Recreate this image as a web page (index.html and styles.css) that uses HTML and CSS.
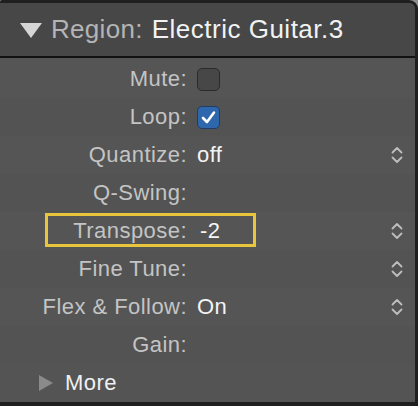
FILE: index.html
```html
<!DOCTYPE html>
<html>
<head>
<meta charset="utf-8">
<link rel="stylesheet" href="styles.css">
</head>
<body>
<div class="panel">
  <div class="header">
    <span class="disclosure-down"></span>
    <span class="h-label">Region:</span>
    <span class="h-value">Electric Guitar.3</span>
  </div>
  <div class="rows">
    <div class="row">
      <span class="label">Mute:</span>
      <span class="value"><span class="check"></span></span>
    </div>
    <div class="row alt">
      <span class="label">Loop:</span>
      <span class="value"><span class="check on"><svg width="23" height="23" viewBox="0 0 23 23"><polyline points="6,12 10,16 17,6.5" fill="none" stroke="#fff" stroke-width="2.6" stroke-linecap="round" stroke-linejoin="round"/></svg></span></span>
    </div>
    <div class="row">
      <span class="label">Quantize:</span>
      <span class="value">off</span>
      <span class="stepper"><svg width="12" height="20" viewBox="0 0 12 20"><polyline points="1.5,7.5 6,3 10.5,7.5" /><polyline points="1.5,12.5 6,17 10.5,12.5" /></svg></span>
    </div>
    <div class="row alt">
      <span class="label">Q-Swing:</span>
      <span class="value"></span>
    </div>
    <div class="row">
      <span class="highlight"></span>
      <span class="label">Transpose:</span>
      <span class="value pad">-2</span>
      <span class="stepper"><svg width="12" height="20" viewBox="0 0 12 20"><polyline points="1.5,7.5 6,3 10.5,7.5" /><polyline points="1.5,12.5 6,17 10.5,12.5" /></svg></span>
    </div>
    <div class="row alt">
      <span class="label">Fine Tune:</span>
      <span class="value"></span>
      <span class="stepper"><svg width="12" height="20" viewBox="0 0 12 20"><polyline points="1.5,7.5 6,3 10.5,7.5" /><polyline points="1.5,12.5 6,17 10.5,12.5" /></svg></span>
    </div>
    <div class="row">
      <span class="label">Flex &amp; Follow:</span>
      <span class="value">On</span>
      <span class="stepper"><svg width="12" height="20" viewBox="0 0 12 20"><polyline points="1.5,7.5 6,3 10.5,7.5" /><polyline points="1.5,12.5 6,17 10.5,12.5" /></svg></span>
    </div>
    <div class="row alt">
      <span class="label">Gain:</span>
      <span class="value"></span>
    </div>
    <div class="more">
      <span class="disclosure-right"></span>
      <span class="more-text">More</span>
    </div>
  </div>
</div>
</body>
</html>
```

FILE: styles.css
```css
html, body {
  margin: 0;
  padding: 0;
}
body {
  background: #8e8e8e;
  width: 418px;
  height: 406px;
  overflow: hidden;
  font-family: "Liberation Sans", Arial, sans-serif;
}
.panel {
  box-sizing: border-box;
  width: 418px;
  height: 406px;
  background: #545454;
  border-top: 3px solid #1f1f1f;
  border-right: 3px solid #1f1f1f;
  border-bottom: 4px solid #1f1f1f;
  border-top-right-radius: 9px;
  border-top-left-radius: 2px;
  overflow: hidden;
  display: flex;
  flex-direction: column;
}
.header {
  height: 56px;
  background: #474747;
  border-bottom: 2px solid #111;
  display: flex;
  align-items: center;
  padding-left: 20px;
  font-size: 26px;
  letter-spacing: 0.3px;
  box-sizing: content-box;
}
.disclosure-down {
  width: 0;
  height: 0;
  border-left: 11px solid transparent;
  border-right: 11px solid transparent;
  border-top: 15px solid #d6d6d6;
  margin-right: 9px;
  margin-top: 2px;
}
.h-label {
  color: #b4b4b4;
  margin-right: 9px;
}
.h-value {
  color: #f2f2f2;
  letter-spacing: 0.5px;
}
.rows {
  display: flex;
  flex-direction: column;
  padding-top: 2px;
}
.row {
  position: relative;
  height: 38px;
  display: grid;
  grid-template-columns: 187px 1fr 24px;
  align-items: center;
  font-size: 22px;
  letter-spacing: 0.45px;
  background: #555555;
}
.row.alt {
  background: #535353;
}
.label {
  color: #c4c4c4;
  text-align: right;
  white-space: nowrap;
}
.value {
  color: #f4f4f4;
  padding-left: 10px;
  display: flex;
  align-items: center;
}
.value.pad {
  padding-left: 13px;
}
.check {
  box-sizing: border-box;
  width: 23px;
  height: 23px;
  border-radius: 5px;
  background: #474747;
  border: 1px solid #2a2a2a;
  display: inline-block;
  margin-top: 1px;
}
.check.on {
  background: #2f67ad;
  border-color: #1f3d66;
}
.check svg {
  display: block;
  margin: -1px;
}
.stepper {
  display: flex;
  align-items: center;
}
.stepper svg polyline {
  fill: none;
  stroke: #bdbdbd;
  stroke-width: 1.8;
  stroke-linecap: round;
  stroke-linejoin: round;
}
.highlight {
  position: absolute;
  left: 45px;
  top: 1px;
  width: 211px;
  height: 34px;
  box-sizing: border-box;
  border: 3px solid #e8c63c;
}
.more {
  height: 38px;
  display: flex;
  align-items: center;
  padding-left: 39px;
  font-size: 22px;
  letter-spacing: 0.45px;
}
.disclosure-right {
  width: 0;
  height: 0;
  border-top: 8px solid transparent;
  border-bottom: 8px solid transparent;
  border-left: 14px solid #8a8a8a;
  margin-right: 12px;
}
.more-text {
  color: #f0f0f0;
}
```
